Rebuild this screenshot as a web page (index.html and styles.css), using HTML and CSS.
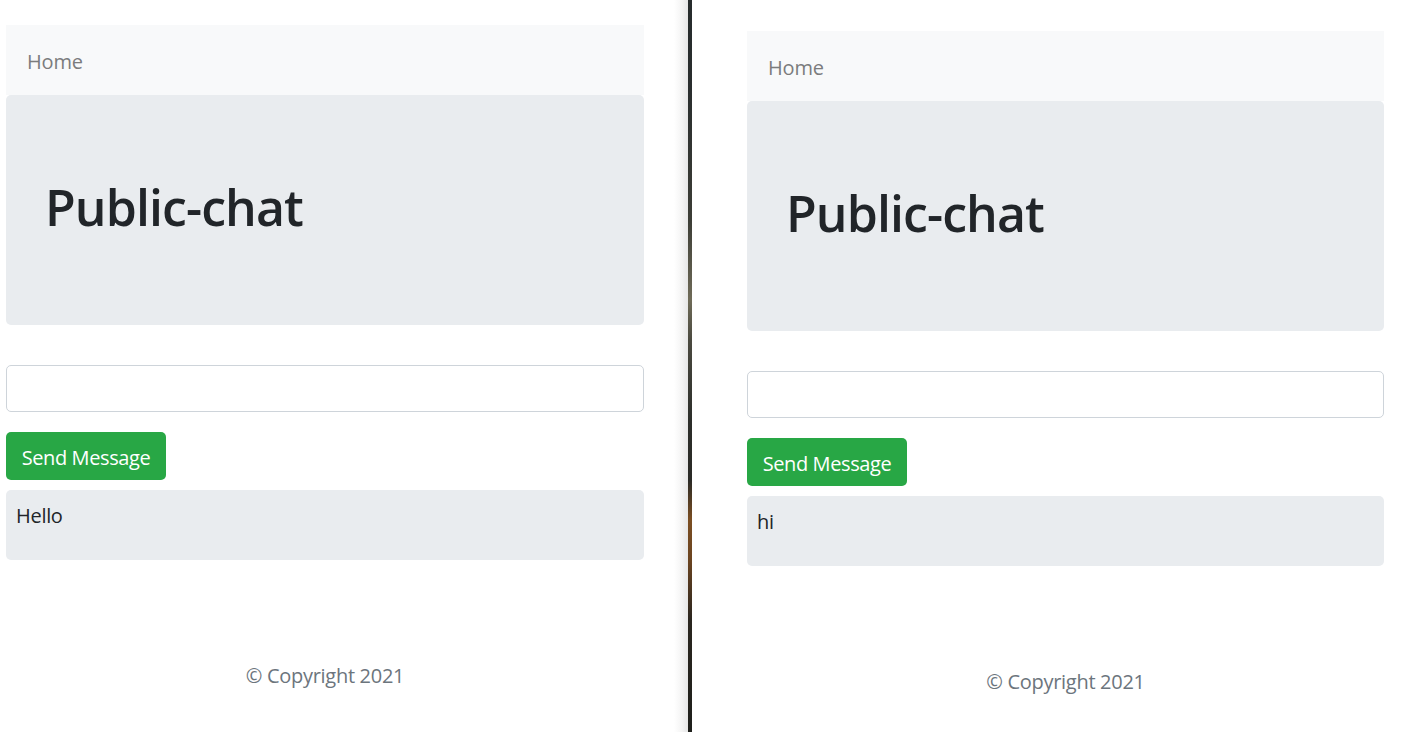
FILE: index.html
```html
<!DOCTYPE html>
<html lang="en">
<head>
<meta charset="utf-8">
<title>Public-chat</title>
<link rel="stylesheet" href="styles.css">
</head>
<body>
<div class="desktop">
  <section class="window window-left">
    <div class="page">
      <nav class="navbar"><a class="nav-link" href="#">Home</a></nav>
      <header class="jumbotron"><h1 class="title">Public-chat</h1></header>
      <input class="form-control" type="text">
      <button class="btn-send" type="button">Send Message</button>
      <div class="message"><p>Hello</p></div>
      <footer class="footer">© Copyright 2021</footer>
    </div>
  </section>
  <div class="divider"></div>
  <section class="window window-right">
    <div class="page">
      <nav class="navbar"><a class="nav-link" href="#">Home</a></nav>
      <header class="jumbotron"><h1 class="title">Public-chat</h1></header>
      <input class="form-control" type="text">
      <button class="btn-send" type="button">Send Message</button>
      <div class="message"><p>hi</p></div>
      <footer class="footer">© Copyright 2021</footer>
    </div>
  </section>
</div>
</body>
</html>
```
FILE: styles.css
```css
* { box-sizing: border-box; }
html, body {
  margin: 0;
  padding: 0;
  height: 100%;
  overflow: hidden;
}
body {
  font-family: "Open Sans", "Noto Sans", sans-serif;
  font-size: 20px;
  line-height: 1.5;
  color: #212529;
  background: #fff;
}
.desktop {
  display: flex;
  height: 732px;
}
.window {
  background: #fff;
  height: 100%;
}
.window-left {
  width: 688px;
  flex: none;
  padding: 25px 0 0 6px;
  background: linear-gradient(to right, #fff 0, #fff 674px, #f4f4f4 682px, #e6e6e6 688px);
}
.window-right {
  flex: 1;
  padding: 31px 0 0 55px;
}
.divider {
  width: 4px;
  flex: none;
  background: linear-gradient(to bottom,
    #262b2c 0, #2a2e2e 90px, #3c3d36 220px, #6f6b58 300px, #4b4a40 340px,
    #2c2e2a 420px, #2a2a26 480px, #7b4e22 520px, #6b4420 560px,
    #2a261f 620px, #1e1f1b 732px);
}
.page {
  width: 638px;
  display: flex;
  flex-direction: column;
  align-items: flex-start;
}
.window-right .page { width: 637px; }
.navbar {
  width: 100%;
  height: 70px;
  background: #f8f9fa;
  padding: 22px 21px 18px;
  display: flex;
  align-items: center;
}
.nav-link {
  color: #7b7c7d;
  text-decoration: none;
  line-height: 30px;
  letter-spacing: -0.2px;
}
.jumbotron {
  width: 100%;
  height: 230px;
  background: #e9ecef;
  border-radius: 5px;
  padding: 82px 39px 0;
  margin-bottom: 40px;
}
.title {
  margin: 0;
  font-size: 50px;
  line-height: 60px;
  font-weight: 600;
  letter-spacing: -0.9px;
  color: #212529;
}
.form-control {
  display: block;
  width: 100%;
  height: 47px;
  border: 1px solid #ced4da;
  border-radius: 5px;
  background: #fff;
  font: inherit;
  padding: 7px 15px;
  margin: 0 0 20px;
  outline: none;
}
.btn-send {
  height: 48px;
  width: 160px;
  border: 0;
  border-radius: 5px;
  background: #28a745;
  color: #fff;
  font: inherit;
  font-size: 20px;
  line-height: 30px;
  letter-spacing: -0.4px;
  padding: 3px 0 0;
  margin: 0 0 10px;
  cursor: pointer;
}
.message {
  width: 100%;
  background: #e9ecef;
  border-radius: 5px;
  padding: 11px 10px 9px;
}
.message p {
  margin: 0 0 20px;
  line-height: 30px;
  letter-spacing: -0.3px;
}
.footer {
  width: 100%;
  text-align: center;
  color: #6c757d;
  line-height: 30px;
  margin-top: 101px;
  letter-spacing: -0.3px;
}
```
